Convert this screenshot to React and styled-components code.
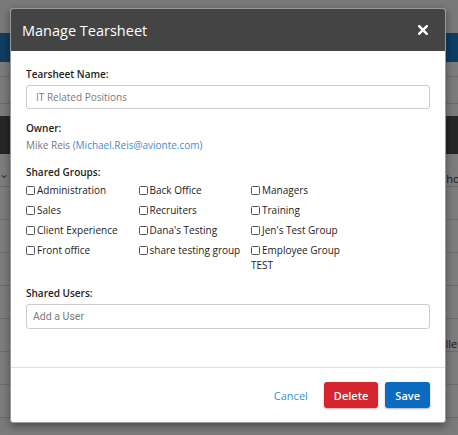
import React from 'react'
import styled, { createGlobalStyle } from 'styled-components'

const GlobalStyle = createGlobalStyle`
  html, body {
    margin: 0;
    padding: 0;
  }
  body {
    font-family: "Open Sans", "Liberation Sans", sans-serif;
    background: #f4f4f4;
    overflow: hidden;
  }
`

const groups = [
  'Administration',
  'Back Office',
  'Managers',
  'Sales',
  'Recruiters',
  'Training',
  'Client Experience',
  "Dana's Testing",
  "Jen's Test Group",
  'Front office',
  'share testing group',
  'Employee Group TEST',
]

const App = () => {
  return (
    <>
      <GlobalStyle />
      <Screen>
        <AppPage>
          <TopStrip />
          <NavBar />
          <SubRow />
          <SubRow $tall />
          <Spacer />
          <DarkBand />
          <TableRow>
            <Chevron>⌄</Chevron>
            <RowText $shift={-11}>School</RowText>
          </TableRow>
          <TableRow />
          <TableRow />
          <TableRow />
          <TableRow />
          <TableRow>
            <span />
            <RowText $shift={-6}>Allen</RowText>
          </TableRow>
          <TableRow />
          <TableRow />
        </AppPage>
        <Overlay />
        <Modal>
          <ModalHeader>
            <ModalTitle>Manage Tearsheet</ModalTitle>
            <CloseButton aria-label="close">
              <svg width="10" height="10" viewBox="0 0 10 10">
                <path
                  d="M1.2 1.2 L8.8 8.8 M8.8 1.2 L1.2 8.8"
                  stroke="#fff"
                  strokeWidth="2.4"
                  strokeLinecap="square"
                />
              </svg>
            </CloseButton>
          </ModalHeader>
          <ModalBody>
            <Label>Tearsheet Name:</Label>
            <TextInput defaultValue="IT Related Positions" />

            <Label $top={12}>Owner:</Label>
            <OwnerLine>
              Mike Reis (<OwnerLink href="#">Michael.Reis@avionte.com</OwnerLink>)
            </OwnerLine>

            <Label $top={13}>Shared Groups:</Label>
            <GroupGrid>
              {groups.map((g) => (
                <GroupItem key={g}>
                  <Box type="checkbox" />
                  {g}
                </GroupItem>
              ))}
            </GroupGrid>

            <Label $top={13}>Shared Users:</Label>
            <TextInput $user placeholder="Add a User" />
          </ModalBody>
          <ModalFooter>
            <LinkButton>Cancel</LinkButton>
            <SolidButton $color="#d4262c">Delete</SolidButton>
            <SolidButton $color="#0b6cbf">Save</SolidButton>
          </ModalFooter>
        </Modal>
      </Screen>
    </>
  )
}

export default App

const Screen = styled.div`
  position: relative;
  width: 458px;
  height: 435px;
  overflow: hidden;
`

const AppPage = styled.div`
  display: flex;
  flex-direction: column;
  height: 100%;
  background: #f6f6f6;
`

const TopStrip = styled.div`
  height: 33px;
  background: #f2f2f2;
`

const NavBar = styled.div`
  height: 29px;
  background: #1f7ac4;
`

const SubRow = styled.div`
  height: ${(p) => (p.$tall ? 26 : 14)}px;
  border-bottom: 1px solid #d4d4d4;
  background: #f6f6f6;
`

const Spacer = styled.div`
  height: 12px;
`

const DarkBand = styled.div`
  height: 38px;
  background: #4d4d4d;
`

const TableRow = styled.div`
  display: flex;
  justify-content: space-between;
  align-items: flex-end;
  height: 33px;
  border-bottom: 1px solid #d4d4d4;
  background: #fafafa;
  font-size: 11px;
  color: #333;
  box-sizing: border-box;
`

const Chevron = styled.span`
  color: #2a7dc9;
  font-size: 12px;
  line-height: 14px;
  margin-left: -1px;
  margin-bottom: 5px;
`

const RowText = styled.span`
  line-height: 14px;
  margin-right: ${(p) => p.$shift}px;
  white-space: nowrap;
`

const Overlay = styled.div`
  position: absolute;
  inset: 0;
  background: rgba(0, 0, 0, 0.5);
`

const Modal = styled.div`
  position: absolute;
  top: 8px;
  left: 10px;
  width: 436px;
  background: #fff;
  border-radius: 3px;
  overflow: hidden;
  box-shadow: 0 3px 8px rgba(0, 0, 0, 0.4);
  border: 1px solid #9a9a9a;
  box-sizing: border-box;
`

const ModalHeader = styled.div`
  display: flex;
  align-items: center;
  justify-content: space-between;
  height: 42px;
  padding: 0 17px 0 11px;
  background: #444444;
`

const ModalTitle = styled.h4`
  margin: 0;
  color: #fff;
  font-size: 14.5px;
  font-weight: 500;
`

const CloseButton = styled.button`
  display: flex;
  border: none;
  background: none;
  padding: 0;
  cursor: pointer;
`

const ModalBody = styled.div`
  display: flex;
  flex-direction: column;
  padding: 16px 15px 38px 15px;
`

const Label = styled.label`
  margin-top: ${(p) => p.$top || 0}px;
  font-size: 10px;
  line-height: 14px;
  font-weight: 600;
  color: #222;
`

const TextInput = styled.input`
  margin-top: 4px;
  height: ${(p) => (p.$user ? 25 : 24)}px;
  box-sizing: border-box;
  border: 1px solid #cccccc;
  border-radius: 3px;
  padding: 0 ${(p) => (p.$user ? 6 : 9)}px;
  font-family: ${(p) =>
    p.$user ? 'Roboto, "Liberation Sans", sans-serif' : '"Open Sans", sans-serif'};
  font-size: ${(p) => (p.$user ? 10.5 : 10)}px;
  color: #7a7a7a;
  outline: none;

  &::placeholder {
    color: #7a7a7a;
  }
`

const OwnerLine = styled.div`
  margin-top: 3px;
  font-size: 10px;
  line-height: 14px;
  color: #777;
`

const OwnerLink = styled.a`
  color: #3a8ed8;
  text-decoration: none;
`

const GroupGrid = styled.div`
  display: grid;
  grid-template-columns: repeat(3, 112.5px);
  row-gap: 5px;
  margin-top: 4px;
`

const GroupItem = styled.label`
  font-size: 10px;
  line-height: 15px;
  font-weight: 500;
  color: #222;
`

const Box = styled.input`
  appearance: none;
  display: inline-block;
  vertical-align: -1px;
  width: 9px;
  height: 9px;
  margin: 0 2px 0 0;
  border: 1px solid #555;
  border-radius: 1.5px;
  background: #fff;
  box-sizing: border-box;
`

const ModalFooter = styled.div`
  display: flex;
  justify-content: flex-end;
  align-items: center;
  gap: 7px;
  padding: 14px 15px 14px;
  border-top: 1px solid #dedede;
`

const LinkButton = styled.button`
  border: none;
  background: none;
  padding: 0 9px;
  font-family: "Open Sans", sans-serif;
  font-size: 11px;
  color: #3a8ed8;
  cursor: pointer;
`

const SolidButton = styled.button`
  height: 26px;
  padding: 0 10px;
  border: none;
  border-radius: 3px;
  background: ${(p) => p.$color};
  color: #fff;
  font-family: "Open Sans", sans-serif;
  font-size: 11px;
  font-weight: 600;
  box-shadow: 0 1px 2px rgba(0, 0, 0, 0.3);
  cursor: pointer;
`
